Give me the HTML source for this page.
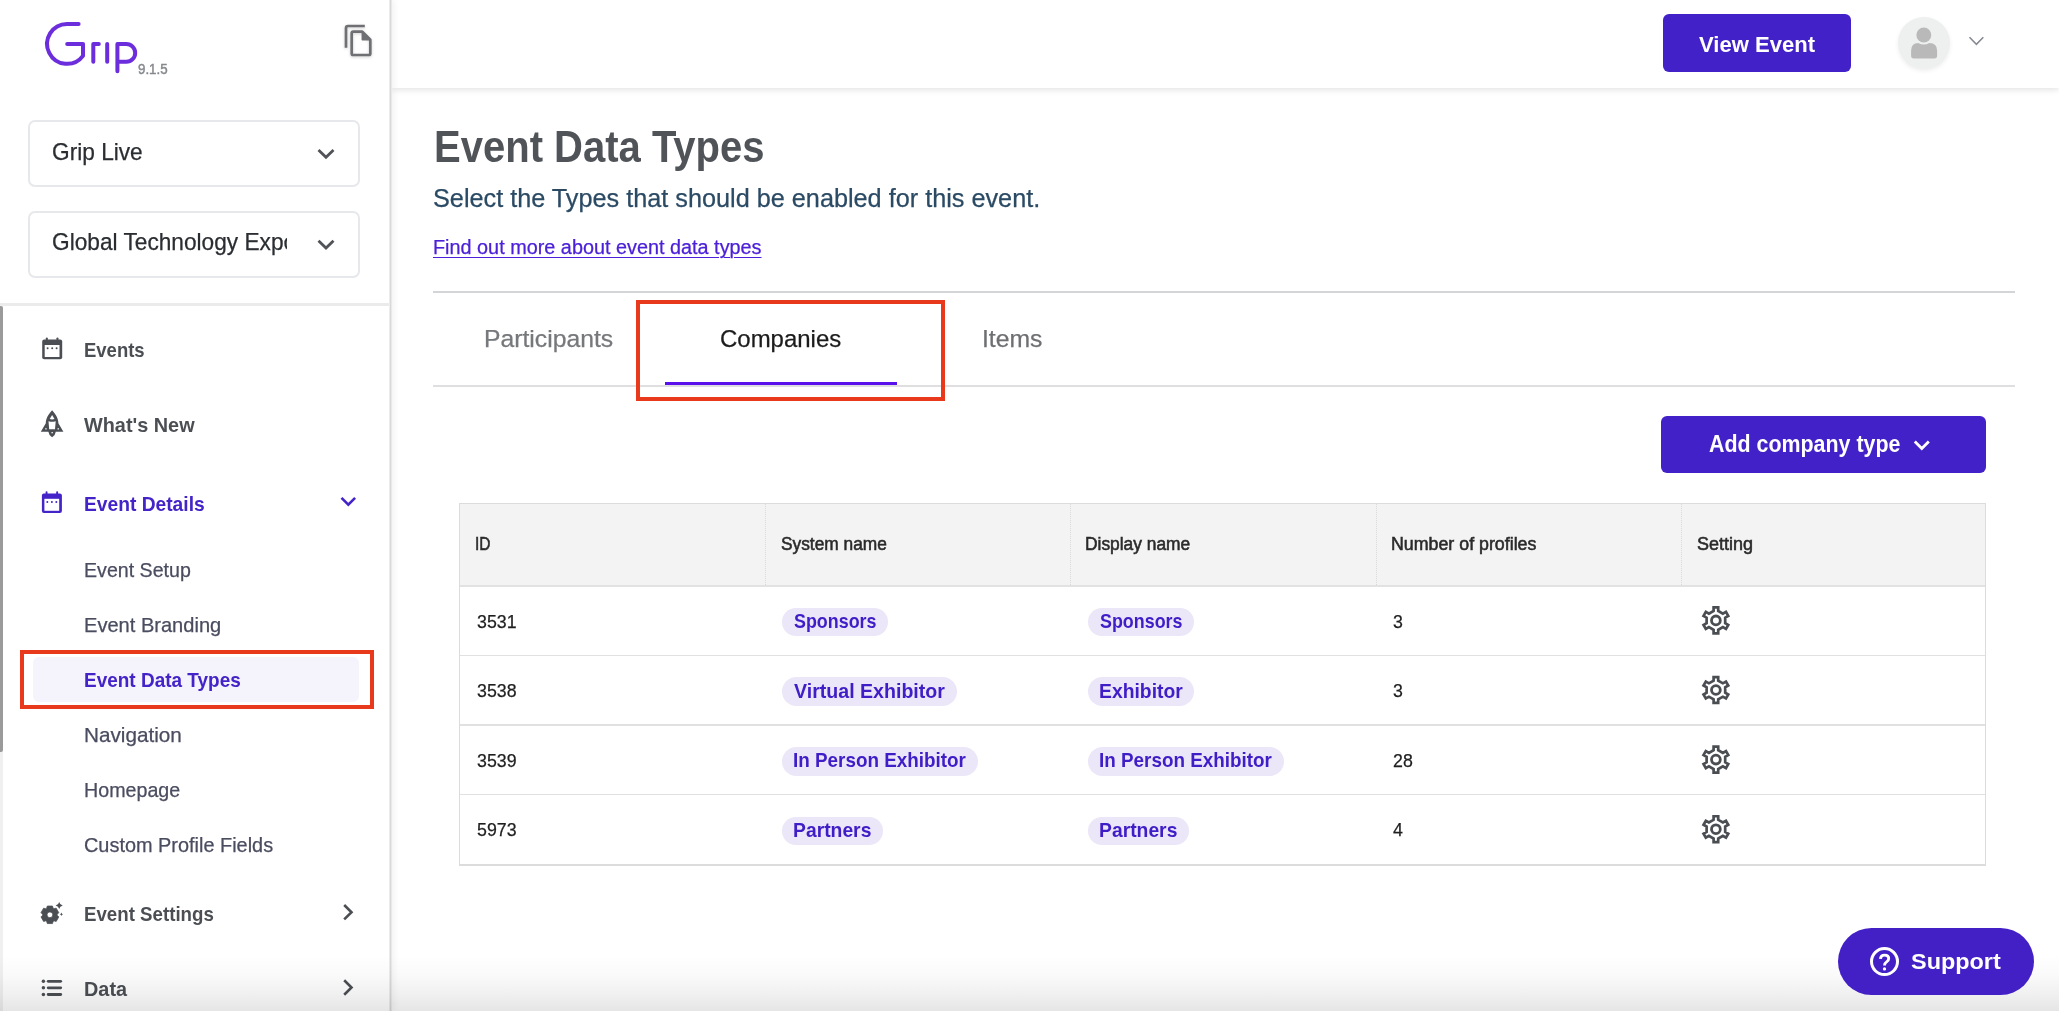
<!DOCTYPE html>
<html><head><meta charset="utf-8"><title>Event Data Types</title>
<style>
html,body{margin:0;padding:0;}
body{width:2059px;height:1011px;overflow:hidden;background:#fff;position:relative;font-family:"Liberation Sans",sans-serif;}
.a{position:absolute;box-sizing:border-box;}
.t{position:absolute;white-space:nowrap;transform-origin:0 0;}
svg{position:absolute;left:0;top:0;overflow:visible;}
</style></head><body>

<div class="a" style="left:392px;top:0;width:1667px;height:88px;background:#fff;box-shadow:0 2px 6px rgba(0,0,0,0.11);z-index:1"></div>
<div class="a" style="left:0;top:0;width:391px;height:1011px;background:#fff;border-right:1px solid #d9d9da;box-shadow:1px 0 0 #e9e9ea, 3px 0 6px rgba(0,0,0,0.055);z-index:2"></div>
<div class="a" style="left:389px;top:0;width:1px;height:1011px;background:#ececed;z-index:2"></div>
<svg width="2059" height="1011" style="z-index:3" viewBox="0 0 2059 1011">
<g fill="none" stroke="#6c2ddc" stroke-width="4" stroke-linecap="round" stroke-linejoin="round">
<path d="M78.6 23.9 H67 A19.95 19.95 0 1 0 83 55.85 V44 H67.2"/>
<path d="M93.3 61.8 V44 H98.8"/>
<path d="M107.2 44 V61.8"/>
<path d="M117.4 71.3 V44 H126.3 A8.9 8.9 0 0 1 126.3 61.8 H117.6"/>
</g>
<g fill="none" stroke="#6f7074" stroke-width="2.7" style="filter:drop-shadow(0 1px 1.5px rgba(0,0,0,0.18))">
<path d="M346 47.8 V28 Q346 26 348 26 H364.8"/>
<path d="M362.3 31.7 H353.3 Q351.7 31.7 351.7 33.3 V53.4 Q351.7 55 353.3 55 H368.7 Q370.3 55 370.3 53.4 V39.7 Z" stroke-linejoin="round"/>
</g>
<path d="M362.3 31.7 L370.3 39.7 H362.3 Z" fill="#6f7074" stroke="#6f7074" stroke-width="1.5" stroke-linejoin="round"/>
</svg>
<div class="a" style="left:28px;top:120.2px;width:332px;height:67.3px;border:2px solid #e7e8eb;border-radius:7px;z-index:3"></div>
<div class="a" style="left:28px;top:210.9px;width:332px;height:67.2px;border:2px solid #e7e8eb;border-radius:7px;z-index:3"></div>
<svg width="2059" height="1011" style="z-index:3"><g fill="none" stroke="#505357" stroke-width="2.8" stroke-linecap="butt" stroke-linejoin="miter">
<polyline points="318.5,150 326,157.3 333.5,150"/>
<polyline points="318.5,240.7 326,248 333.5,240.7"/>
</g></svg>
<div class="a" style="left:0;top:302.5px;width:389px;height:3px;background:#ebebeb;z-index:3"></div>
<div class="a" style="left:0;top:305px;width:3px;height:706px;background:#f0f0f0;z-index:3"></div>
<div class="a" style="left:0;top:305.5px;width:3px;height:446.5px;background:#9a9a9a;border-radius:0 2px 2px 0;z-index:3"></div>
<div class="a" style="left:33px;top:656.6px;width:325.8px;height:45px;background:#f5f3fb;border-radius:6px;z-index:3"></div>
<div class="a" style="left:20px;top:650px;width:354px;height:59px;border:4px solid #e8391d;z-index:6"></div>
<svg width="2059" height="1011" style="z-index:3">
<g transform="translate(0,0)" fill="#4b4f54">
<rect x="42.2" y="339.6" width="20" height="19.6" rx="2"/>
<rect x="44.7" y="345.0" width="14.8" height="12.0" fill="#fff"/>
<rect x="45.9" y="337.4" width="1.9" height="3.5" rx="0.9"/>
<rect x="56.5" y="337.4" width="1.9" height="3.5" rx="0.9"/>
<circle cx="47.6" cy="348.3" r="1.0"/>
<circle cx="52.2" cy="348.3" r="1.0"/>
<circle cx="56.6" cy="348.3" r="1.0"/>
</g>
<g transform="translate(-0.3,153.8)" fill="#4424c8">
<rect x="42.2" y="339.6" width="20" height="19.6" rx="2"/>
<rect x="44.7" y="345.0" width="14.8" height="12.0" fill="#fff"/>
<rect x="45.9" y="337.4" width="1.9" height="3.5" rx="0.9"/>
<rect x="56.5" y="337.4" width="1.9" height="3.5" rx="0.9"/>
<circle cx="47.6" cy="348.3" r="1.0"/>
<circle cx="52.2" cy="348.3" r="1.0"/>
<circle cx="56.6" cy="348.3" r="1.0"/>
</g>
<g fill="#4b4f54">
<path d="M52.1,410.3 C55.6,414 58.4,418.5 58.4,423.2 L63.4,431.7 L55.8,431.7 Q55.4,435.2 52.1,437.2 Q48.8,435.2 48.4,431.7 L40.8,431.7 L45.8,423.2 C45.8,418.5 48.6,414 52.1,410.3 Z"/>
<path d="M52.1,415 L54.5,419 Q52.1,419.8 49.7,419 Z" fill="#fff"/>
<path d="M48.5,421.2 Q52.1,422.3 55.7,421.2 L55,429.2 L49.2,429.2 Z" fill="#fff"/>
<rect x="45.3" y="428.2" width="1.3" height="1.3" fill="#fff"/>
<rect x="57.6" y="428.2" width="1.3" height="1.3" fill="#fff"/>
<rect x="51.5" y="432" width="1.3" height="1.3" fill="#fff"/>
</g>
<g fill="#4b4f54">
<path fill-rule="evenodd" stroke="#4b4f54" stroke-width="0.8" stroke-linejoin="round" d="M46.70,908.20 L47.30,906.05 L52.50,906.05 L53.10,908.20 L54.02,908.73 L56.18,908.17 L58.78,912.68 L57.22,914.27 L57.22,915.33 L58.78,916.92 L56.18,921.43 L54.02,920.87 L53.10,921.40 L52.50,923.55 L47.30,923.55 L46.70,921.40 L45.78,920.87 L43.62,921.43 L41.02,916.92 L42.58,915.33 L42.58,914.27 L41.02,912.68 L43.62,908.17 L45.78,908.73 Z M47.00,914.80 A2.9,2.9 0 1 0 52.80,914.80 A2.9,2.9 0 1 0 47.00,914.80 Z"/>
<path d="M59.2,901.9 Q59.8,904.8 62.7,905.4 Q59.8,906 59.2,908.9 Q58.6,906 55.7,905.4 Q58.6,904.8 59.2,901.9 Z"/>
<path d="M61.4,912.6 Q61.7,914 63.1,914.3 Q61.7,914.6 61.4,916 Q61.1,914.6 59.7,914.3 Q61.1,914 61.4,912.6 Z"/>
</g>
<g fill="#4b4f54">
<circle cx="43.4" cy="981.3" r="1.75"/><circle cx="43.4" cy="987.8" r="1.75"/><circle cx="43.4" cy="994.5" r="1.75"/>
</g>
<g stroke="#4b4f54" stroke-width="2.8" stroke-linecap="round">
<line x1="48.2" y1="981.3" x2="60.7" y2="981.3"/><line x1="48.2" y1="987.8" x2="60.7" y2="987.8"/><line x1="48.2" y1="994.5" x2="60.7" y2="994.5"/>
</g>
<g fill="none" stroke-width="2.6">
<polyline points="341.5,497.8 348.3,504.6 355.1,497.8" stroke="#4424c8"/>
<polyline points="344.2,905 351.5,912.2 344.2,919.4" stroke="#4b4f54"/>
<polyline points="344.2,980.3 351.5,987.5 344.2,994.7" stroke="#4b4f54"/>
</g>
</svg>
<div class="a" style="left:1663px;top:14.2px;width:187.5px;height:58px;background:#4321c9;border-radius:6px;z-index:3"></div>
<div class="a" style="left:1898px;top:17.3px;width:52px;height:52px;background:#eeefef;border-radius:50%;box-shadow:0 2px 4px rgba(0,0,0,0.07);z-index:3"></div>
<svg width="2059" height="1011" style="z-index:3">
<circle cx="1923.8" cy="35" r="7.45" fill="#b9b9b9"/>
<path d="M1911.1,55.8 V50.5 Q1911.1,43 1918.2,42.9 Q1923.8,46.2 1929.4,42.9 Q1937.1,43 1937.1,50.5 V55.8 Q1937.1,58.5 1934.4,58.5 H1913.8 Q1911.1,58.5 1911.1,55.8 Z" fill="#b9b9b9"/>
<polyline points="1969.5,37.2 1976.4,44.3 1983.3,37.2" fill="none" stroke="#868a93" stroke-width="1.6"/>
</svg>
<div class="a" style="left:433px;top:291.2px;width:1582px;height:1.8px;background:#d4d5d9;z-index:3"></div>
<div class="a" style="left:433px;top:385.2px;width:1582px;height:1.5px;background:#dfdfe1;z-index:3"></div>
<div class="a" style="left:664.6px;top:382px;width:232px;height:3.3px;background:#5a10ea;z-index:4"></div>
<div class="a" style="left:636px;top:300px;width:309px;height:101.3px;border:4px solid #e8391d;z-index:6"></div>
<div class="a" style="left:1661px;top:415.7px;width:325.3px;height:57.7px;background:#4321c9;border-radius:6px;z-index:3"></div>
<svg width="2059" height="1011" style="z-index:4"><polyline points="1914.8,441.5 1921.8,448.5 1928.8,441.5" fill="none" stroke="#fff" stroke-width="2.8"/></svg>
<div class="a" style="left:459.3px;top:503px;width:1527.0px;height:363px;border:1.5px solid #dcdcdc;border-bottom-width:2px;background:#fff;z-index:3"></div>
<div class="a" style="left:460.3px;top:504px;width:1525.0px;height:83px;background:#f3f3f3;border-bottom:2px solid #e2e2e2;z-index:3"></div>
<div class="a" style="left:765.3px;top:504px;width:0;height:81px;border-left:1px dotted #d9d9d9;z-index:3"></div>
<div class="a" style="left:1070.4px;top:504px;width:0;height:81px;border-left:1px dotted #d9d9d9;z-index:3"></div>
<div class="a" style="left:1376.4px;top:504px;width:0;height:81px;border-left:1px dotted #d9d9d9;z-index:3"></div>
<div class="a" style="left:1681.4px;top:504px;width:0;height:81px;border-left:1px dotted #d9d9d9;z-index:3"></div>
<div class="a" style="left:460.3px;top:654.6px;width:1525.0px;height:1.5px;background:#e1e1e1;z-index:3"></div>
<div class="a" style="left:460.3px;top:724.2px;width:1525.0px;height:1.5px;background:#e1e1e1;z-index:3"></div>
<div class="a" style="left:460.3px;top:793.8px;width:1525.0px;height:1.5px;background:#e1e1e1;z-index:3"></div>
<div class="a" style="left:782.00px;top:607.70px;width:106.00px;height:28.7px;background:#ebe6f8;border-radius:15px;z-index:4"></div>
<div class="a" style="left:1087.80px;top:607.70px;width:106.00px;height:28.7px;background:#ebe6f8;border-radius:15px;z-index:4"></div>
<div class="a" style="left:782.00px;top:677.30px;width:174.70px;height:28.7px;background:#ebe6f8;border-radius:15px;z-index:4"></div>
<div class="a" style="left:1087.80px;top:677.30px;width:106.60px;height:28.7px;background:#ebe6f8;border-radius:15px;z-index:4"></div>
<div class="a" style="left:782.00px;top:746.90px;width:195.80px;height:28.7px;background:#ebe6f8;border-radius:15px;z-index:4"></div>
<div class="a" style="left:1087.80px;top:746.90px;width:195.80px;height:28.7px;background:#ebe6f8;border-radius:15px;z-index:4"></div>
<div class="a" style="left:782.00px;top:816.50px;width:100.90px;height:28.7px;background:#ebe6f8;border-radius:15px;z-index:4"></div>
<div class="a" style="left:1087.80px;top:816.50px;width:100.90px;height:28.7px;background:#ebe6f8;border-radius:15px;z-index:4"></div>
<svg width="2059" height="1011" style="z-index:4"><path transform="translate(1715.9,620.4)" d="M-2.30,-9.40 L-2.30,-12.95 L2.30,-12.95 L2.30,-9.40 L6.99,-6.69 L10.07,-8.47 L12.37,-4.48 L9.29,-2.71 L9.29,2.71 L12.37,4.48 L10.07,8.47 L6.99,6.69 L2.30,9.40 L2.30,12.95 L-2.30,12.95 L-2.30,9.40 L-6.99,6.69 L-10.07,8.47 L-12.37,4.48 L-9.29,2.71 L-9.29,-2.71 L-12.37,-4.48 L-10.07,-8.47 L-6.99,-6.69 Z" fill="none" stroke="#4a4d52" stroke-width="2.7" stroke-linejoin="miter"/><circle cx="1715.9" cy="620.4" r="4.4" fill="none" stroke="#4a4d52" stroke-width="2.8"/><path transform="translate(1715.9,690.0)" d="M-2.30,-9.40 L-2.30,-12.95 L2.30,-12.95 L2.30,-9.40 L6.99,-6.69 L10.07,-8.47 L12.37,-4.48 L9.29,-2.71 L9.29,2.71 L12.37,4.48 L10.07,8.47 L6.99,6.69 L2.30,9.40 L2.30,12.95 L-2.30,12.95 L-2.30,9.40 L-6.99,6.69 L-10.07,8.47 L-12.37,4.48 L-9.29,2.71 L-9.29,-2.71 L-12.37,-4.48 L-10.07,-8.47 L-6.99,-6.69 Z" fill="none" stroke="#4a4d52" stroke-width="2.7" stroke-linejoin="miter"/><circle cx="1715.9" cy="690.0" r="4.4" fill="none" stroke="#4a4d52" stroke-width="2.8"/><path transform="translate(1715.9,759.6)" d="M-2.30,-9.40 L-2.30,-12.95 L2.30,-12.95 L2.30,-9.40 L6.99,-6.69 L10.07,-8.47 L12.37,-4.48 L9.29,-2.71 L9.29,2.71 L12.37,4.48 L10.07,8.47 L6.99,6.69 L2.30,9.40 L2.30,12.95 L-2.30,12.95 L-2.30,9.40 L-6.99,6.69 L-10.07,8.47 L-12.37,4.48 L-9.29,2.71 L-9.29,-2.71 L-12.37,-4.48 L-10.07,-8.47 L-6.99,-6.69 Z" fill="none" stroke="#4a4d52" stroke-width="2.7" stroke-linejoin="miter"/><circle cx="1715.9" cy="759.6" r="4.4" fill="none" stroke="#4a4d52" stroke-width="2.8"/><path transform="translate(1715.9,829.2)" d="M-2.30,-9.40 L-2.30,-12.95 L2.30,-12.95 L2.30,-9.40 L6.99,-6.69 L10.07,-8.47 L12.37,-4.48 L9.29,-2.71 L9.29,2.71 L12.37,4.48 L10.07,8.47 L6.99,6.69 L2.30,9.40 L2.30,12.95 L-2.30,12.95 L-2.30,9.40 L-6.99,6.69 L-10.07,8.47 L-12.37,4.48 L-9.29,2.71 L-9.29,-2.71 L-12.37,-4.48 L-10.07,-8.47 L-6.99,-6.69 Z" fill="none" stroke="#4a4d52" stroke-width="2.7" stroke-linejoin="miter"/><circle cx="1715.9" cy="829.2" r="4.4" fill="none" stroke="#4a4d52" stroke-width="2.8"/></svg>
<div class="a" style="left:0;top:955px;width:2059px;height:56px;background:linear-gradient(to bottom,rgba(0,0,0,0) 0%,rgba(0,0,0,0.02) 35%,rgba(0,0,0,0.06) 70%,rgba(0,0,0,0.10) 100%);z-index:7;pointer-events:none"></div>
<div class="a" style="left:1838.2px;top:928.2px;width:196.3px;height:66.7px;background:#431fc6;border-radius:34px;z-index:8"></div>
<svg width="2059" height="1011" style="z-index:9">
<circle cx="1884.5" cy="961.6" r="13.0" fill="none" stroke="#fff" stroke-width="3.0"/>
<path d="M1880.4,958.9 Q1880.7,955.1 1884.6,955.1 Q1888.7,955.1 1888.7,958.5 Q1888.7,960.5 1886.6,961.9 Q1884.5,963.3 1884.5,965.6" fill="none" stroke="#fff" stroke-width="2.9" stroke-linecap="butt"/>
<circle cx="1884.5" cy="968.9" r="1.65" fill="#fff"/>
</svg>
<div class="t" style="z-index:5;left:52.04px;top:140.73px;font-size:23.7px;line-height:23.7px;font-weight:normal;color:#2a2d31;transform:scaleX(0.9572);-webkit-text-stroke:0.25px #2a2d31">Grip Live</div>
<div class="a" style="left:0;top:0;width:287px;height:300px;overflow:hidden;z-index:5"><div class="t" style="left:52.04px;top:231.13px;font-size:23.7px;line-height:23.7px;font-weight:normal;color:#2a2d31;transform:scaleX(0.9572);-webkit-text-stroke:0.25px #2a2d31">Global Technology Expo</div></div>
<div class="t" style="z-index:5;left:138.40px;top:61.51px;font-size:14.4px;line-height:14.4px;font-weight:normal;color:#86898d;transform:scaleX(0.9249);-webkit-text-stroke:0.45px #86898d">9.1.5</div>
<div class="t" style="z-index:5;left:84.38px;top:339.89px;font-size:20.2px;line-height:20.2px;font-weight:bold;color:#4b4f54;transform:scaleX(0.9158)">Events</div>
<div class="t" style="z-index:5;left:84.00px;top:415.09px;font-size:20.2px;line-height:20.2px;font-weight:bold;color:#4b4f54;transform:scaleX(0.9833)">What's New</div>
<div class="t" style="z-index:5;left:83.75px;top:493.69px;font-size:20.2px;line-height:20.2px;font-weight:bold;color:#4424c8;transform:scaleX(0.9518)">Event Details</div>
<div class="t" style="z-index:5;left:83.73px;top:559.99px;font-size:20.2px;line-height:20.2px;font-weight:normal;color:#4a4c5f;transform:scaleX(0.9710);-webkit-text-stroke:0.25px #4a4c5f">Event Setup</div>
<div class="t" style="z-index:5;left:83.61px;top:614.99px;font-size:20.2px;line-height:20.2px;font-weight:normal;color:#4a4c5f;transform:scaleX(0.9940);-webkit-text-stroke:0.25px #4a4c5f">Event Branding</div>
<div class="t" style="z-index:5;left:83.76px;top:669.89px;font-size:20.2px;line-height:20.2px;font-weight:bold;color:#4424c8;transform:scaleX(0.9398)">Event Data Types</div>
<div class="t" style="z-index:5;left:83.57px;top:724.99px;font-size:20.2px;line-height:20.2px;font-weight:normal;color:#4a4c5f;transform:scaleX(1.0251);-webkit-text-stroke:0.25px #4a4c5f">Navigation</div>
<div class="t" style="z-index:5;left:83.63px;top:779.99px;font-size:20.2px;line-height:20.2px;font-weight:normal;color:#4a4c5f;transform:scaleX(0.9740);-webkit-text-stroke:0.25px #4a4c5f">Homepage</div>
<div class="t" style="z-index:5;left:83.61px;top:834.99px;font-size:20.2px;line-height:20.2px;font-weight:normal;color:#4a4c5f;transform:scaleX(0.9856);-webkit-text-stroke:0.25px #4a4c5f">Custom Profile Fields</div>
<div class="t" style="z-index:5;left:84.07px;top:904.09px;font-size:20.2px;line-height:20.2px;font-weight:bold;color:#4b4f54;transform:scaleX(0.9260)">Event Settings</div>
<div class="t" style="z-index:5;left:84.02px;top:979.09px;font-size:20.2px;line-height:20.2px;font-weight:bold;color:#4b4f54;transform:scaleX(0.9833)">Data</div>
<div class="t" style="z-index:5;left:1698.60px;top:32.68px;font-size:22.7px;line-height:22.7px;font-weight:bold;color:#ffffff;transform:scaleX(0.9715)">View Event</div>
<div class="t" style="z-index:5;left:433.91px;top:125.35px;font-size:44.7px;line-height:44.7px;font-weight:bold;color:#505458;transform:scaleX(0.8953)">Event Data Types</div>
<div class="t" style="z-index:5;left:432.79px;top:185.55px;font-size:25.1px;line-height:25.1px;font-weight:normal;color:#2b4a64;transform:scaleX(1.0060);-webkit-text-stroke:0.25px #2b4a64">Select the Types that should be enabled for this event.</div>
<div class="t" style="z-index:5;left:432.79px;top:238.30px;font-size:19.6px;line-height:19.6px;font-weight:normal;color:#4b20d8;transform:scaleX(1.0121);-webkit-text-stroke:0.25px #4b20d8;text-decoration:underline;text-underline-offset:3px;text-decoration-thickness:1.2px">Find out more about event data types</div>
<div class="t" style="z-index:5;left:484.46px;top:328.33px;font-size:23.7px;line-height:23.7px;font-weight:normal;color:#76787b;transform:scaleX(1.0442);-webkit-text-stroke:0.25px #76787b">Participants</div>
<div class="t" style="z-index:5;left:719.59px;top:328.33px;font-size:23.7px;line-height:23.7px;font-weight:normal;color:#1c1c1c;transform:scaleX(1.0121);-webkit-text-stroke:0.25px #1c1c1c">Companies</div>
<div class="t" style="z-index:5;left:982.01px;top:328.13px;font-size:23.7px;line-height:23.7px;font-weight:normal;color:#6d6f72;transform:scaleX(1.0442);-webkit-text-stroke:0.25px #6d6f72">Items</div>
<div class="t" style="z-index:5;left:1709.00px;top:433.35px;font-size:23.2px;line-height:23.2px;font-weight:bold;color:#ffffff;transform:scaleX(0.9227)">Add company type</div>
<div class="t" style="z-index:5;left:474.84px;top:535.36px;font-size:18px;line-height:18px;font-weight:normal;color:#2a2a2a;transform:scaleX(0.8588);-webkit-text-stroke:0.55px #2a2a2a">ID</div>
<div class="t" style="z-index:5;left:780.50px;top:535.36px;font-size:18px;line-height:18px;font-weight:normal;color:#2a2a2a;transform:scaleX(0.9616);-webkit-text-stroke:0.55px #2a2a2a">System name</div>
<div class="t" style="z-index:5;left:1085.24px;top:535.36px;font-size:18px;line-height:18px;font-weight:normal;color:#2a2a2a;transform:scaleX(0.9645);-webkit-text-stroke:0.55px #2a2a2a">Display name</div>
<div class="t" style="z-index:5;left:1391.01px;top:535.36px;font-size:18px;line-height:18px;font-weight:normal;color:#2a2a2a;transform:scaleX(0.9886);-webkit-text-stroke:0.55px #2a2a2a">Number of profiles</div>
<div class="t" style="z-index:5;left:1697.00px;top:535.36px;font-size:18px;line-height:18px;font-weight:normal;color:#2a2a2a;transform:scaleX(0.9995);-webkit-text-stroke:0.55px #2a2a2a">Setting</div>
<div class="t" style="z-index:5;left:477.00px;top:612.59px;font-size:18.2px;line-height:18.2px;font-weight:normal;color:#1f1f1f;transform:scaleX(0.9766);-webkit-text-stroke:0.25px #1f1f1f">3531</div>
<div class="t" style="z-index:5;left:1393.20px;top:612.59px;font-size:18.2px;line-height:18.2px;font-weight:normal;color:#1f1f1f;transform:scaleX(0.9766);-webkit-text-stroke:0.25px #1f1f1f">3</div>
<div class="t" style="z-index:5;left:793.80px;top:612.23px;font-size:19.8px;line-height:19.8px;font-weight:bold;color:#3f1dc7;transform:scaleX(0.9043)">Sponsors</div>
<div class="t" style="z-index:5;left:1099.60px;top:612.23px;font-size:19.8px;line-height:19.8px;font-weight:bold;color:#3f1dc7;transform:scaleX(0.9043)">Sponsors</div>
<div class="t" style="z-index:5;left:477.00px;top:682.19px;font-size:18.2px;line-height:18.2px;font-weight:normal;color:#1f1f1f;transform:scaleX(0.9766);-webkit-text-stroke:0.25px #1f1f1f">3538</div>
<div class="t" style="z-index:5;left:1393.20px;top:682.19px;font-size:18.2px;line-height:18.2px;font-weight:normal;color:#1f1f1f;transform:scaleX(0.9766);-webkit-text-stroke:0.25px #1f1f1f">3</div>
<div class="t" style="z-index:5;left:793.80px;top:681.83px;font-size:19.8px;line-height:19.8px;font-weight:bold;color:#3f1dc7;transform:scaleX(0.9901)">Virtual Exhibitor</div>
<div class="t" style="z-index:5;left:1098.62px;top:681.83px;font-size:19.8px;line-height:19.8px;font-weight:bold;color:#3f1dc7;transform:scaleX(0.9774)">Exhibitor</div>
<div class="t" style="z-index:5;left:477.00px;top:751.79px;font-size:18.2px;line-height:18.2px;font-weight:normal;color:#1f1f1f;transform:scaleX(0.9766);-webkit-text-stroke:0.25px #1f1f1f">3539</div>
<div class="t" style="z-index:5;left:1393.20px;top:751.79px;font-size:18.2px;line-height:18.2px;font-weight:normal;color:#1f1f1f;transform:scaleX(0.9766);-webkit-text-stroke:0.25px #1f1f1f">28</div>
<div class="t" style="z-index:5;left:792.85px;top:751.43px;font-size:19.8px;line-height:19.8px;font-weight:bold;color:#3f1dc7;transform:scaleX(0.9537)">In Person Exhibitor</div>
<div class="t" style="z-index:5;left:1098.65px;top:751.43px;font-size:19.8px;line-height:19.8px;font-weight:bold;color:#3f1dc7;transform:scaleX(0.9537)">In Person Exhibitor</div>
<div class="t" style="z-index:5;left:477.00px;top:821.39px;font-size:18.2px;line-height:18.2px;font-weight:normal;color:#1f1f1f;transform:scaleX(0.9766);-webkit-text-stroke:0.25px #1f1f1f">5973</div>
<div class="t" style="z-index:5;left:1393.20px;top:821.39px;font-size:18.2px;line-height:18.2px;font-weight:normal;color:#1f1f1f;transform:scaleX(0.9766);-webkit-text-stroke:0.25px #1f1f1f">4</div>
<div class="t" style="z-index:5;left:792.82px;top:821.03px;font-size:19.8px;line-height:19.8px;font-weight:bold;color:#3f1dc7;transform:scaleX(0.9765)">Partners</div>
<div class="t" style="z-index:5;left:1098.62px;top:821.03px;font-size:19.8px;line-height:19.8px;font-weight:bold;color:#3f1dc7;transform:scaleX(0.9765)">Partners</div>
<div class="t" style="z-index:10;left:1910.80px;top:951.12px;font-size:22.3px;line-height:22.3px;font-weight:bold;color:#ffffff;transform:scaleX(1.0508)">Support</div>
</body></html>
